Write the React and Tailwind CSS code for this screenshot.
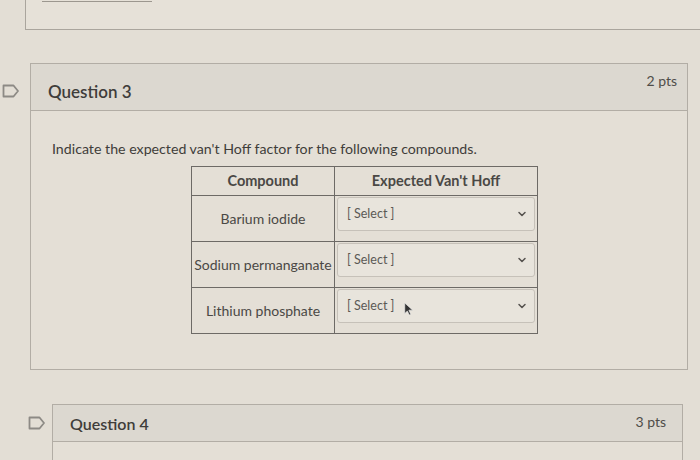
import { ChevronDown } from 'lucide-react'

const rows = ['Barium iodide', 'Sodium permanganate', 'Lithium phosphate']

function Flag({ className = '' }) {
  return (
    <svg viewBox="0 0 18 14" className={className} fill="none" stroke="#8d8a85" strokeWidth="1.8">
      <path d="M1.5 1.5h10l4.5 5.5-4.5 5.5h-10z" strokeLinejoin="round" />
    </svg>
  )
}

function Cursor() {
  return (
    <svg viewBox="0 0 12 18" className="absolute left-[66px] top-[12px] w-[9px] h-[14px]">
      <path d="M1 1v14l3.5-3.5 2.5 5.5 2-1-2.5-5.5h5z" fill="#333" stroke="#eee" strokeWidth="0.8" />
    </svg>
  )
}

export default function App() {
  return (
    <div
      className="w-[700px] h-[460px] overflow-hidden bg-[#e3ded5] text-[#4a4845]"
      style={{ fontFamily: 'Lato, "Open Sans", sans-serif' }}
    >
      {/* previous question, bottom edge */}
      <div className="ml-[25px] h-[30px] border-l border-b border-[#aaa59d] bg-[#e6e1d8]">
        <div className="ml-[16px] w-[110px] h-[2px] border-b border-[#9c978f]" />
      </div>

      {/* Question 3 */}
      <div className="mt-[33px] flex">
        <div className="w-[30px] pt-[21px] pl-[2px]">
          <Flag className="w-[18px] h-[14px]" />
        </div>
        <div className="flex-1 mr-[12px] border border-[#b2ada5]">
          <div className="h-[47px] flex justify-between bg-[#dcd8d0] border-b border-[#b2ada5] pl-[17px] pr-[10px]">
            <span className="text-[17px] font-semibold mt-[15px] text-[#3f3d3a]">Question 3</span>
            <span className="text-[14px] mt-[6px] text-[#4f4d49]">2 pts</span>
          </div>
          <div className="h-[258px] bg-[#e4dfd6] pl-[21px] pt-[27px]">
            <p className="text-[14.2px] text-[#3f3d3a]">
              Indicate the expected van't Hoff factor for the following compounds.
            </p>
            <table className="mt-[7px] ml-[139px] border-collapse border-[1.5px] border-[#6d6a66] text-[14px]">
              <thead>
                <tr className="h-[29px]">
                  <th className="w-[143px] border-[1.5px] border-[#6d6a66] font-bold text-[14.5px] text-[#4a4845]">Compound</th>
                  <th className="w-[203px] border-[1.5px] border-[#6d6a66] font-bold text-[14.5px] text-[#4a4845]">
                    Expected Van't Hoff
                  </th>
                </tr>
              </thead>
              <tbody>
                {rows.map((name, i) => (
                  <tr key={name} className="h-[46px]">
                    <td className="border-[1.5px] border-[#6d6a66] text-center px-0">{name}</td>
                    <td className="border-[1.5px] border-[#6d6a66] align-top px-[2px] pt-[1px]">
                      <div className="relative h-[34px] flex items-center justify-between rounded-[3px] border border-[#c6c1b9] bg-[#e8e4dc] pl-[9px] pr-[6px]">
                        <span className="text-[12.5px] text-[#5b5955]">[ Select ]</span>
                        <ChevronDown className="w-[12px] h-[12px] text-[#55524e]" strokeWidth={3} />
                        {i === 2 && <Cursor />}
                      </div>
                    </td>
                  </tr>
                ))}
              </tbody>
            </table>
          </div>
        </div>
      </div>

      {/* Question 4 */}
      <div className="mt-[34px] flex">
        <div className="w-[52px] pt-[12px] pl-[28px]">
          <Flag className="w-[18px] h-[14px]" />
        </div>
        <div className="flex-1 mr-[17px] border border-[#b2ada5]">
          <div className="h-[37px] flex justify-between bg-[#dcd8d0] border-b border-[#b2ada5] pl-[17px] pr-[16px]">
            <span className="text-[16px] font-semibold mt-[7px] text-[#3f3d3a]">Question 4</span>
            <span className="text-[14px] mt-[6px] text-[#4f4d49]">3 pts</span>
          </div>
          <div className="h-[30px] bg-[#e4dfd6]" />
        </div>
      </div>
    </div>
  )
}
